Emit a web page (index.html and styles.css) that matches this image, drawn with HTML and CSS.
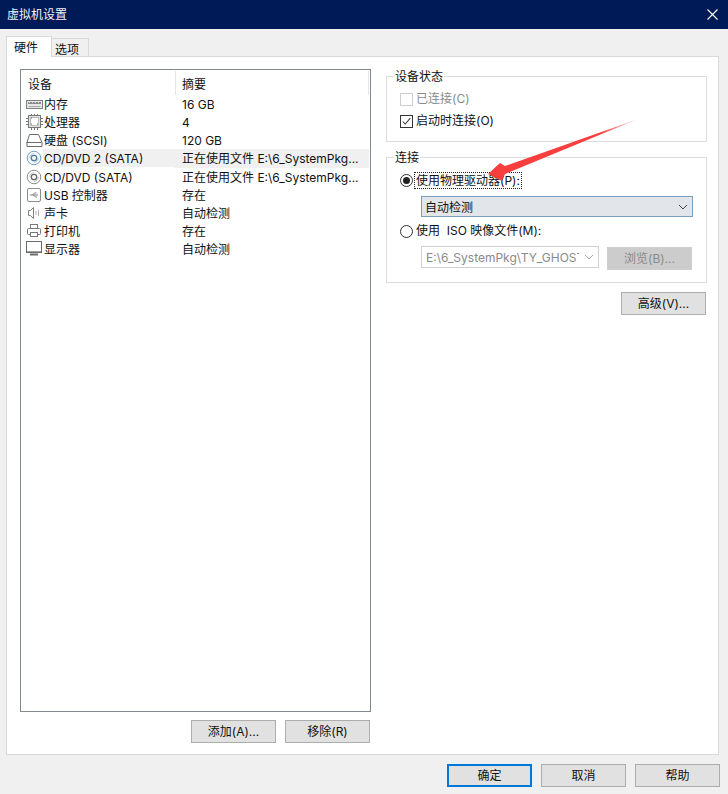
FILE: index.html
```html
<!DOCTYPE html>
<html lang="zh-CN">
<head>
<meta charset="utf-8">
<title>虚拟机设置</title>
<link rel="stylesheet" href="styles.css">
</head>
<body>
<div class="dialog">
  <header class="titlebar">
    <span class="title">虚拟机设置</span>
    <svg class="close" viewBox="0 0 11 11" width="11" height="11"><path d="M0.5 0.5L10.5 10.5M10.5 0.5L0.5 10.5" stroke="#fff" stroke-width="1.1" fill="none"/></svg>
  </header>
  <div class="tabs">
    <div class="tab active">硬件</div>
    <div class="tab">选项</div>
  </div>
  <main class="panel">
    <section class="left">
      <div class="list">
        <div class="row head"><span class="c1 h1">设备</span><span class="c2 h2">摘要</span></div>
        <div class="row"><span class="c1"><svg class="ico" viewBox="0 0 17 16"><rect x="0.5" y="4.5" width="16" height="8" fill="#e8e8e8" stroke="#808080"/><rect x="2" y="6" width="13" height="2" fill="#8a8a8a"/><path d="M3 6.5h1M6 6.5h1M9 6.5h1M12 6.5h1" stroke="#ddd"/><path d="M2.5 10.5h12" stroke="#a8a8a8"/></svg><span>内存</span></span><span class="c2">16 GB</span></div>
        <div class="row"><span class="c1"><svg class="ico" viewBox="0 0 17 16"><rect x="2.5" y="1.5" width="12" height="12" fill="#e4e4e4" stroke="#777"/><rect x="4.5" y="3.5" width="8" height="8" fill="#fff" stroke="#bbb"/><path d="M5 4h1M11 10h1M5 10h1" stroke="#666"/><path d="M0 4.500h2M0 7.500h2M0 10.500h2M15 4.500h2M15 7.500h2M15 10.500h2M5.500 0v1M8.500 0v1M11.500 0v1M5.500 14v2M8.500 14v2M11.500 14v2" stroke="#777"/></svg><span>处理器</span></span><span class="c2">4</span></div>
        <div class="row"><span class="c1"><svg class="ico" viewBox="0 0 17 16"><path d="M3.500 2.500h9l3.500 8v4h-15v-4z" fill="#fff" stroke="#6a6a6a"/><path d="M0.500 10.500h15" stroke="#6a6a6a"/></svg><span>硬盘 (SCSI)</span></span><span class="c2">120 GB</span></div>
        <div class="row"><span class="c1"><svg class="ico" viewBox="0 0 17 16"><circle cx="8" cy="8" r="6.800" fill="#f4f8fc" stroke="#6f9fc8"/><circle cx="8" cy="8" r="2.700" fill="#fff" stroke="#4f7a9f" stroke-width="1.300"/><path d="M3.800 8a4.200 4.200 0 0 1 4.200-4.200M12.200 8a4.200 4.200 0 0 1-4.200 4.200" stroke="#a8c8e0" fill="none"/></svg><span class="sel">CD/DVD 2 (SATA)</span></span><span class="c2 sel2">正在使用文件 E:\6_SystemPkg...</span></div>
        <div class="row"><span class="c1"><svg class="ico" viewBox="0 0 17 16"><circle cx="8" cy="8" r="6.800" fill="#fafafa" stroke="#8c8c8c"/><circle cx="8" cy="8" r="2.700" fill="#fff" stroke="#666" stroke-width="1.300"/><path d="M3.800 8a4.200 4.200 0 0 1 4.200-4.200M12.200 8a4.200 4.200 0 0 1-4.200 4.200" stroke="#c0c0c0" fill="none"/></svg><span>CD/DVD (SATA)</span></span><span class="c2">正在使用文件 E:\6_SystemPkg...</span></div>
        <div class="row"><span class="c1"><svg class="ico" viewBox="0 0 17 16"><rect x="1.500" y="1.500" width="13" height="13" rx="1.500" fill="#fff" stroke="#8c8c8c"/><path d="M4 8h8M6.500 8l2-2h2M7.500 8l2 2h1.500" stroke="#808080" fill="none"/></svg><span>USB 控制器</span></span><span class="c2">存在</span></div>
        <div class="row"><span class="c1"><svg class="ico" viewBox="0 0 17 16"><path d="M2.500 5.500h2l3-3v11l-3-3h-2z" fill="#fff" stroke="#808080"/><path d="M10 6v4M12.500 5v6" stroke="#b0b0b0"/></svg><span>声卡</span></span><span class="c2">自动检测</span></div>
        <div class="row"><span class="c1"><svg class="ico" viewBox="0 0 17 16"><rect x="4.500" y="1.500" width="7" height="4" fill="#fff" stroke="#777"/><rect x="1.500" y="5.500" width="13" height="6" rx="1" fill="#fff" stroke="#777"/><rect x="4.500" y="9.500" width="7" height="4" fill="#fff" stroke="#777"/></svg><span>打印机</span></span><span class="c2">存在</span></div>
        <div class="row"><span class="c1"><svg class="ico" viewBox="0 0 17 16"><rect x="0.500" y="0.500" width="15" height="11" fill="#fff" stroke="#6a6a6a"/><path d="M1 10.500h14" stroke="#a0a0a0"/><path d="M4 13.500h8" stroke="#6a6a6a" stroke-width="2"/></svg><span>显示器</span></span><span class="c2">自动检测</span></div>
      </div>
      <div class="list-actions">
        <button class="btn">添加(A)...</button>
        <button class="btn">移除(R)</button>
      </div>
    </section>
    <section class="right">
      <fieldset class="group status">
        <legend>设备状态</legend>
        <label class="opt disabled"><span class="check off"></span>已连接(C)</label>
        <label class="opt"><span class="check"><svg viewBox="0 0 13 13" width="11" height="11"><path d="M2 6.500L5 9.500L11 2.500" stroke="#333" stroke-width="1.200" fill="none"/></svg></span>启动时连接(O)</label>
      </fieldset>
      <fieldset class="group conn">
        <legend>连接</legend>
        <label class="opt"><span class="radio on"></span><span class="focus">使用物理驱动器(P):</span></label>
        <div class="combo"><span class="val">自动检测</span><svg viewBox="0 0 10 6" width="10" height="6"><path d="M1 1L5 5L9 1" stroke="#444" fill="none"/></svg></div>
        <label class="opt iso"><span class="radio"></span>使用&nbsp;&nbsp;ISO 映像文件(M):</label>
        <div class="iso-row">
          <div class="combo off"><span class="path val">E:\6_SystemPkg\TY_GHOST</span><svg viewBox="0 0 10 6" width="10" height="6"><path d="M1 1L5 5L9 1" stroke="#aaa" fill="none"/></svg></div>
          <button class="btn dim">浏览(B)...</button>
        </div>
      </fieldset>
      <div class="adv"><button class="btn">高级(V)...</button></div>
    </section>
  </main>
  <footer class="footer">
    <button class="btn primary">确定</button>
    <button class="btn">取消</button>
    <button class="btn">帮助</button>
  </footer>
</div>
<svg class="arrow" viewBox="0 0 728 794" width="728" height="794"><defs><linearGradient id="fade" gradientUnits="userSpaceOnUse" x1="638" y1="119" x2="600" y2="134"><stop offset="0" stop-color="#f93e3e" stop-opacity="0.2"/><stop offset="1" stop-color="#f93e3e"/></linearGradient></defs><path d="M638 119L505 166L500 163L488 174L502 181L505 174Z" fill="url(#fade)"/></svg>
</body>
</html>
```
FILE: styles.css
```css
* { box-sizing: border-box; }
html, body { margin: 0; padding: 0; }
body {
  width: 728px; height: 794px; overflow: hidden; position: relative;
  background: #f0f0f0; color: #111;
  font: 12px/16px "Inter", "Noto Sans CJK SC", sans-serif;
}
.dialog { display: flex; flex-direction: column; height: 794px; }
.titlebar {
  height: 29px; flex: none; background: #001a57; color: #f2f4f8;
  display: flex; align-items: center; justify-content: space-between;
  padding: 0 10px 0 7px;
}
.title { font-size: 12px; }
.tabs { display: flex; align-items: flex-end; height: 28px; flex: none; padding-left: 6px; margin-bottom: -1px; position: relative; z-index: 1; }
.tab { width: 37px; height: 19px; padding-left: 3px; line-height: 22px; background: #f0f0f0; border: 1px solid #d9d9d9; border-left: 0; border-bottom: 1px solid #d9d9d9; }
.tab.active { width: 46px; height: 21px; padding-left: 7px; background: #fff; border: 1px solid #d9d9d9; border-bottom: 0; line-height: 22px; }
.panel {
  margin-left: 6px; width: 713px; height: 699px; flex: none;
  background: #fff; border: 1px solid #d9d9d9;
  display: flex; gap: 15px; padding: 12px 0 0 13px;
}
.left { width: 351px; }
.list { height: 643px; border: 1px solid #828790; padding: 1px; }
.row { display: flex; height: 18.15px; line-height: 20px; align-items: stretch; }
.row.head { height: 24px; line-height: 28px; }
.c1 { width: 153px; flex: none; display: flex; align-items: center; padding-left: 4px; white-space: nowrap; }
.c1 span { padding-left: 1px; display: block; height: 18px; }
.c2 { flex: 1; padding-left: 7px; white-space: nowrap; overflow: hidden; }
.h1 { padding-left: 6px; align-items: flex-start; }
.h2 { padding-left: 6px; border-left: 1px solid #e5e5e5; border-right: 1px solid #e5e5e5; }
.ico { width: 17px; height: 16px; flex: none; display: block; }
.sel { background: #f0f0f0; flex: 1; }
.sel2 { background: #f0f0f0; }
.list-actions { display: flex; justify-content: flex-end; gap: 9px; margin-top: 8px; padding-right: 1px; }
.btn {
  width: 85px; height: 23px; padding: 0; margin: 0;
  background: #e1e1e1; border: 1px solid #adadad; color: #111;
  font: inherit; text-align: center;
}
.right { width: 321px; }
.group { margin: 0; border: 1px solid #dcdcdc; padding: 0; min-width: 0; }
.group legend { padding: 0 1px; margin-left: -6px; line-height: 16px; height: 14px; }
.status { height: 73px; padding: 5px 0 0 13px; }
.conn { height: 133px; margin-top: 8px; padding: 5px 13px 0 13px; }
.opt { display: flex; align-items: center; height: 22px; white-space: nowrap; }
.disabled { color: #8a8a8a; }
.check { width: 13px; height: 13px; border: 1px solid #333; margin-right: 3px; display: flex; align-items: center; justify-content: center; background: #fff; }
.check.off { border-color: #cfcfcf; }
.radio { width: 13px; height: 13px; border: 1px solid #333; border-radius: 50%; margin-right: 3px; background: #fff; display: block; position: relative; }
.radio.on::after { content: ""; position: absolute; left: 2px; top: 2px; width: 7px; height: 7px; border-radius: 50%; background: #222; }
.focus { outline: 1px dotted #222; outline-offset: 0; padding: 0 1px; line-height: 15px; margin-left: -1px; }
.combo {
  margin-left: 21px; width: 272px; height: 21px; margin-top: 5px;
  background: #e2e5e9; border: 1px solid #7a9ebd;
  display: flex; align-items: center; justify-content: space-between; padding: 0 4px 0 3px;
}
.val { margin-top: 2px; }
.iso { margin-top: 3px; }
.iso-row { display: flex; gap: 8px; margin-left: 21px; margin-top: 4px; align-items: flex-start; }
.combo.off { margin: 0; width: 178px; height: 22px; background: #fff; border-color: #d0d0d0; color: #8a8a8a; padding: 0 4px 0 4px; overflow: hidden; }
.path { width: 153px; overflow: hidden; white-space: nowrap; flex: none; }
.btn.dim { background: #cccccc; border-color: #cfcfcf; color: #8a8a8a; margin-top: 1px; }
.adv { display: flex; justify-content: flex-end; margin-top: 9px; padding-right: 1px; }
.footer { display: flex; justify-content: flex-end; gap: 9px; padding: 9px 8px 0 0; }
.btn.primary { border: 2px solid #0078d7; }
.arrow { position: absolute; left: 0; top: 0; pointer-events: none; }
```
